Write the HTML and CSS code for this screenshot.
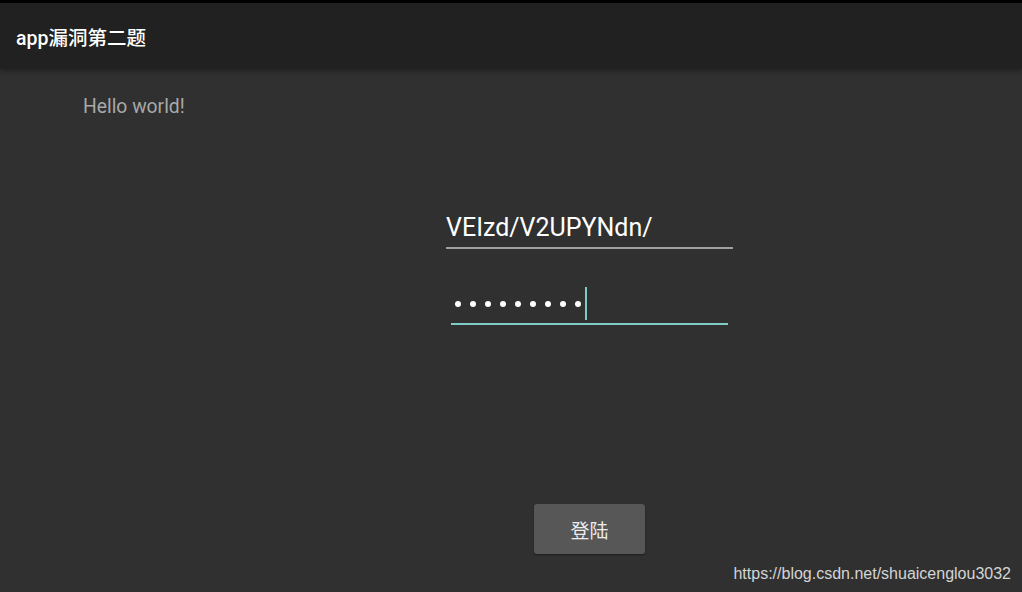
FILE: index.html
```html
<!DOCTYPE html>
<html lang="zh">
<head>
    <meta charset="UTF-8">
    <meta name="viewport" content="width=device-width, initial-scale=1.0">
    <title>app漏洞第二题</title>
    <link rel="stylesheet" href="styles.css">
</head>
<body>
    <div class="status-strip"></div>
    <header class="toolbar">
        <h1 class="toolbar-title">app漏洞第二题</h1>
    </header>
    <main class="content">
        <p class="hello">Hello world!</p>
        <form class="login-form">
            <div class="field field-user">VEIzd/V2UPYNdn/</div>
            <div class="field field-pass">
                <span class="dot"></span>
                <span class="dot"></span>
                <span class="dot"></span>
                <span class="dot"></span>
                <span class="dot"></span>
                <span class="dot"></span>
                <span class="dot"></span>
                <span class="dot"></span>
                <span class="dot"></span>
                <span class="cursor"></span>
            </div>
            <button type="button" class="login-btn">登陆</button>
        </form>
        <div class="watermark">https://blog.csdn.net/shuaicenglou3032</div>
    </main>
</body>
</html>
```

FILE: styles.css
```css
html, body {
    margin: 0;
    height: 100%;
}
body {
    display: flex;
    flex-direction: column;
    background: #303030;
    font-family: Roboto, "Noto Sans CJK SC", sans-serif;
    overflow: hidden;
}
.status-strip {
    height: 3px;
    background: #000;
}
.toolbar {
    height: 66px;
    background: #212121;
    display: flex;
    align-items: center;
    padding-left: 16px;
    box-shadow: 0 2px 5px rgba(0, 0, 0, 0.35);
    position: relative;
    z-index: 1;
}
.toolbar-title {
    margin: 0;
    margin-top: 1px;
    font-size: 19.5px;
    font-weight: 500;
    color: #fff;
}
.content {
    flex: 1;
    position: relative;
    padding-top: 27px;
}
.hello {
    margin: 0 0 0 83px;
    font-size: 19.3px;
    line-height: 21px;
    color: #a8a8a8;
}
.login-form {
    margin: 96px 0 0 446px;
    width: 287px;
    display: flex;
    flex-direction: column;
    align-items: center;
}
.field {
    box-sizing: border-box;
}
.field-user {
    width: 287px;
    font-size: 25px;
    line-height: 29px;
    color: #fff;
    padding-bottom: 5px;
    border-bottom: 2px solid #a0a0a0;
}
.field-pass {
    width: 277px;
    height: 38px;
    margin-top: 38px;
    padding: 0 0 3px 4px;
    border-bottom: 2px solid #80cbc4;
    display: flex;
    align-items: center;
    gap: 9px;
}
.dot {
    width: 6px;
    height: 6px;
    border-radius: 50%;
    background: #fff;
}
.cursor {
    width: 2px;
    height: 33px;
    margin-left: -5px;
    background: #80cbc4;
}
.login-btn {
    margin-top: 179px;
    width: 111px;
    height: 50px;
    border: none;
    border-radius: 3px;
    background: #575757;
    color: #ececec;
    font-family: "Noto Sans CJK SC", sans-serif;
    font-size: 19px;
    box-shadow: 0 1px 2px rgba(0, 0, 0, 0.4);
}
.watermark {
    position: absolute;
    right: 11px;
    bottom: 9px;
    font-family: "Liberation Sans", Arial, sans-serif;
    font-size: 16px;
    color: #d4d4d4;
}
```
